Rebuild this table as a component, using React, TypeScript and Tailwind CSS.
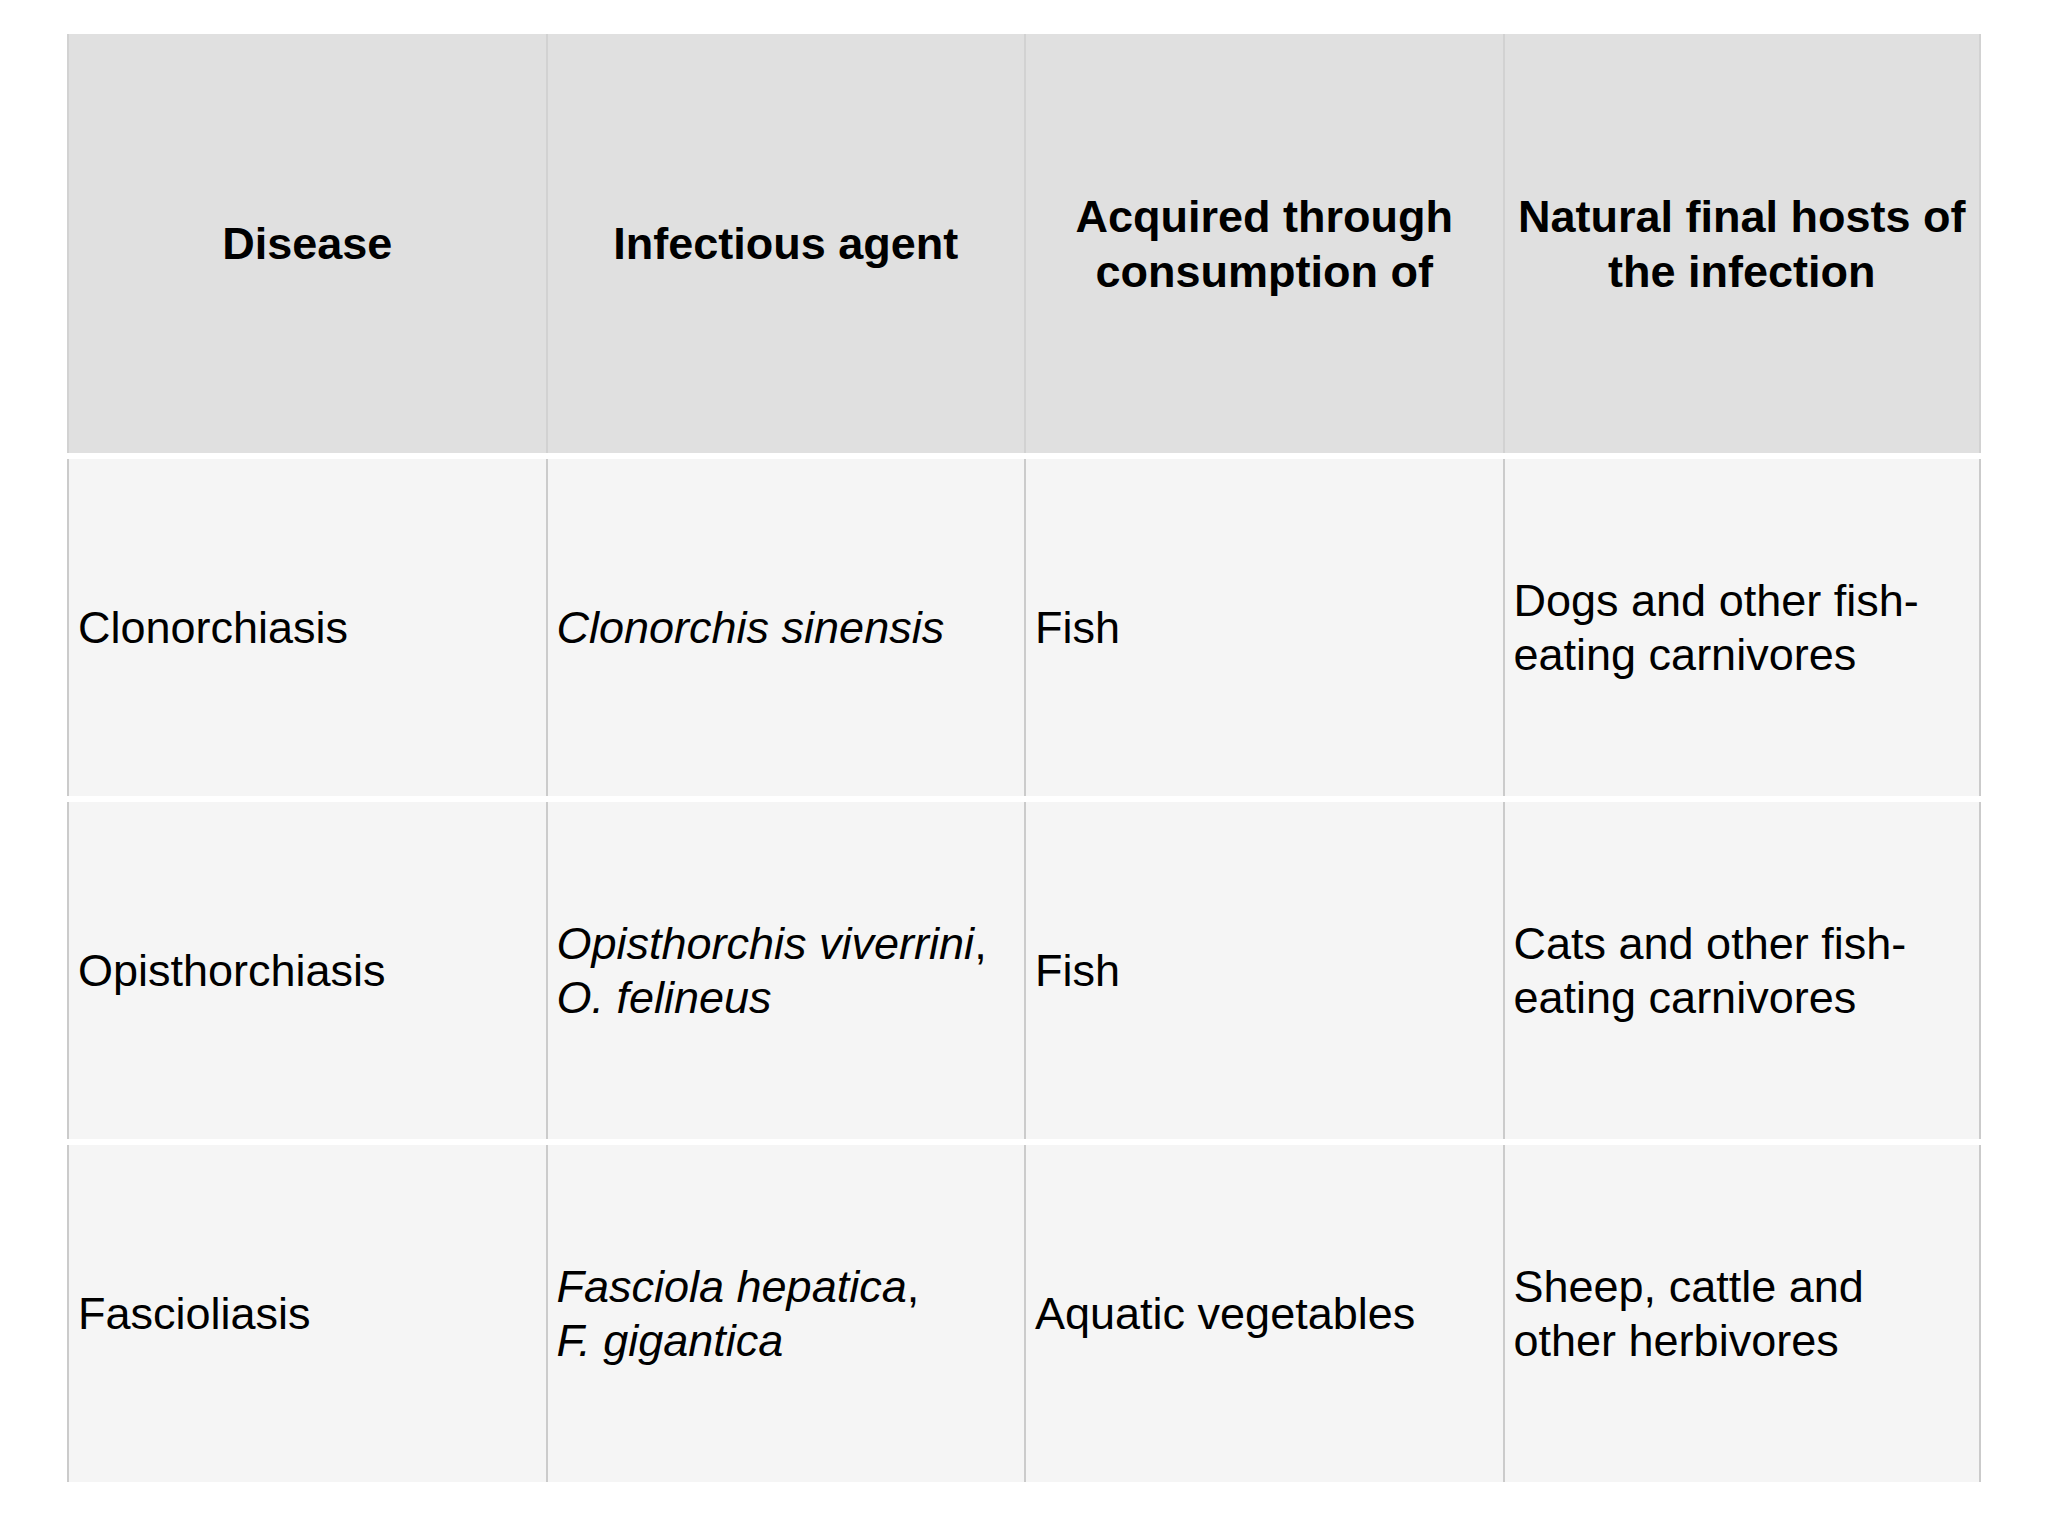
const headers = [
  "Disease",
  "Infectious agent",
  "Acquired through consumption of",
  "Natural final hosts of the infection",
];

type Row = {
  disease: string;
  agent: React.ReactNode;
  source: string;
  hosts: string;
};

const rows: Row[] = [
  {
    disease: "Clonorchiasis",
    agent: <i>Clonorchis sinensis</i>,
    source: "Fish",
    hosts: "Dogs and other fish-eating carnivores",
  },
  {
    disease: "Opisthorchiasis",
    agent: (
      <>
        <i className="whitespace-nowrap">Opisthorchis viverrini</i>,{" "}
        <i className="whitespace-nowrap">O. felineus</i>
      </>
    ),
    source: "Fish",
    hosts: "Cats and other fish-eating carnivores",
  },
  {
    disease: "Fascioliasis",
    agent: (
      <>
        <i className="whitespace-nowrap">Fasciola hepatica</i>,
        <br />
        <i className="whitespace-nowrap">F. gigantica</i>
      </>
    ),
    source: "Aquatic vegetables",
    hosts: "Sheep, cattle and other herbivores",
  },
];

function BodyRow({ row }: { row: Row }) {
  const cells = [row.disease, row.agent, row.source, row.hosts];
  return (
    <div className="grid h-[337px] grid-cols-4 bg-[#f5f5f5]">
      {cells.map((c, i) => (
        <div
          key={i}
          className={
            "flex items-center border-l-2 border-[#cbcbcb] pl-[9px] pr-[10px] text-[45px] leading-[54px] " +
            (i === 3 ? "border-r-2" : "")
          }
        >
          <div>{c}</div>
        </div>
      ))}
    </div>
  );
}

export default function App() {
  return (
    <div
      className="min-h-screen bg-white pl-[67px] pt-[34px] text-black"
      style={{ fontFamily: '"Liberation Sans", Arial, sans-serif' }}
    >
      <div className="flex w-[1914px] flex-col gap-[6px]">
        <div className="grid h-[419px] grid-cols-4 bg-[#e0e0e0]">
          {headers.map((h, i) => (
            <div
              key={h}
              className={
                "flex items-center justify-center border-l-2 border-[#d2d2d2] px-[10px] text-center text-[45px] font-bold leading-[55px] " +
                (i === 3 ? "border-r-2" : "")
              }
            >
              <div>{h}</div>
            </div>
          ))}
        </div>
        {rows.map((r) => (
          <BodyRow key={r.disease} row={r} />
        ))}
      </div>
    </div>
  );
}
